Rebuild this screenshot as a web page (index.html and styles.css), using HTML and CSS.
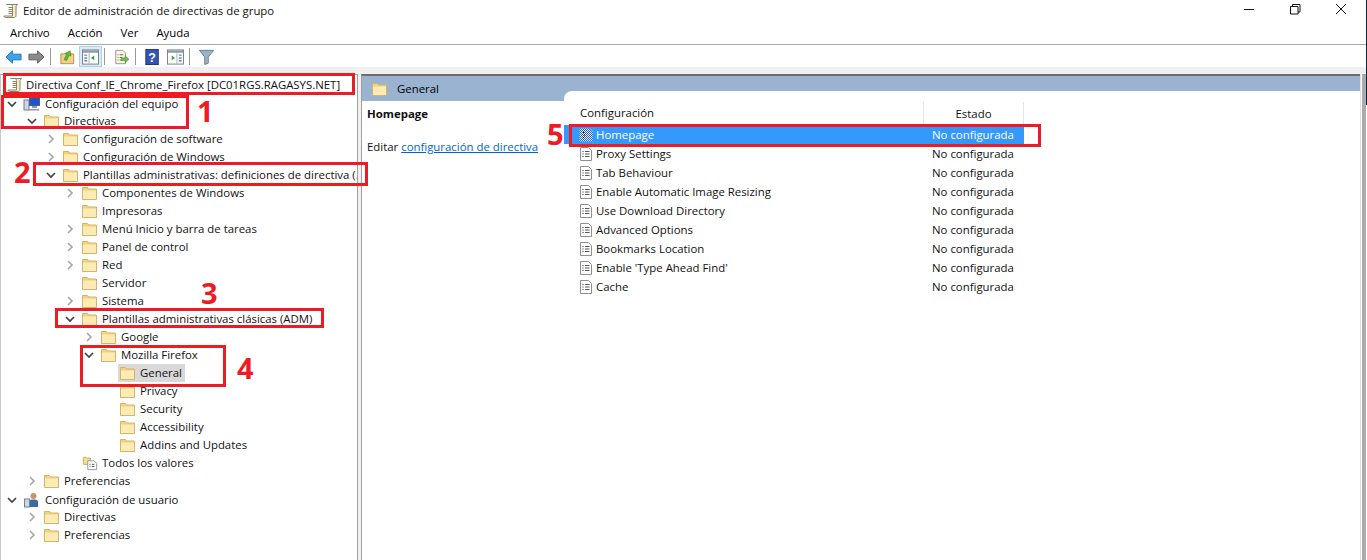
FILE: index.html
```html
<!DOCTYPE html>
<html lang="es">
<head>
<meta charset="utf-8">
<title>Editor de administración de directivas de grupo</title>
<link rel="stylesheet" href="styles.css">
</head>
<body>
<svg class="defs" width="0" height="0">
  <defs>
    <pattern id="dith" width="2" height="2" patternUnits="userSpaceOnUse">
      <rect width="2" height="2" fill="#1860c0"/>
      <rect width="1" height="1" fill="#fff"/>
      <rect x="1" y="1" width="1" height="1" fill="#fff"/>
    </pattern>
    <symbol id="folder" viewBox="0 0 16 16">
      <path d="M.5 2.500h5l1 1.500h8v10.500h-14z" fill="#f3d27e" stroke="#d4b46a"/>
      <path d="M1 5.500h13v8.500h-13z" fill="#fcebb2"/>
    </symbol>
    <symbol id="chev-open" viewBox="0 0 10 10"><path d="M1 3l4 4 4-4" fill="none" stroke="#404040" stroke-width="1.600"/></symbol>
    <symbol id="chev-closed" viewBox="0 0 10 10"><path d="M3 1l4 4-4 4" fill="none" stroke="#a6a6a6" stroke-width="1.600"/></symbol>
    <symbol id="scroll" viewBox="0 0 16 16">
      <path d="M3.500 1.500h11l-1.500 2v9c0 1.500-1 2-2 2H2.500c-1 0-1.500-.7-1.500-1.500h8.500V3.500c0-1-.5-2-2-2z" fill="#f4ecd0" stroke="#8c8463"/>
      <path d="M5.500 4.500h4M5.500 6.500h4M5.500 8.500h4M5.500 10.500h4" stroke="#8c8463"/>
    </symbol>
    <symbol id="setting" viewBox="0 0 16 16">
      <path d="M2.500 1.500h8l3 3v10h-11z" fill="#fff" stroke="#8f8f8f"/>
      <path d="M4.500 5.500h1M4.500 8h1M4.500 10.500h1" stroke="#222"/>
      <path d="M7 5.500h4.500M7 8h4.500M7 10.500h4.500" stroke="#555"/>
    </symbol>
    <symbol id="setting-sel" viewBox="0 0 16 16">
      <path d="M1.500 1.500h10l3 3v10h-13z" fill="url(#dith)"/>
      <path d="M5 5.500h1M6 8h1M5 10.500h1" stroke="#123"/>
    </symbol>
    <symbol id="computer" viewBox="0 0 18 16">
      <rect x="1" y="4" width="5" height="10" fill="#cfd6e3" stroke="#6f7f9c"/>
      <rect x="6.500" y="1.500" width="10" height="8" fill="#1c56c8" stroke="#50607a"/>
      <path d="M9 10h5v2H9zM5 13h11v1.500H5z" fill="#8e9ab0"/>
    </symbol>
    <symbol id="user" viewBox="0 0 18 16">
      <circle cx="10.500" cy="4" r="3" fill="#c69472"/>
      <path d="M6 15V9.500C6 8 8 7.500 10.500 7.500S15 8 15 9.500V15z" fill="#3d6d9c"/>
      <rect x="1.500" y="7" width="5" height="8" fill="#cfd6e3" stroke="#6f7f9c"/>
    </symbol>
    <symbol id="allvalues" viewBox="0 0 18 18">
      <path d="M1.500 2.500h3l1 1h4v7h-8z" fill="#f7dd90" stroke="#c9a95c"/>
      <path d="M6.500 6.500h7l3 3v7h-10z" fill="#fff" stroke="#8f8f8f"/>
      <path d="M8.500 10.500h1M8.500 13h1M11 10.500h3M11 13h3" stroke="#444"/>
    </symbol>
  </defs>
</svg>

<div class="window">
  <header class="titlebar">
    <svg class="title-icon"><use href="#scroll"/></svg>
    <span class="title-text">Editor de administración de directivas de grupo</span>
    <div class="window-controls">
      <svg class="wc" viewBox="0 0 12 12"><path d="M1 6.500h10" stroke="#111" fill="none"/></svg>
      <svg class="wc" viewBox="0 0 12 12"><path d="M1.500 3.500h7.500v7.500H1.500zM3.500 3.500V1.500h7.500v7.500H9" stroke="#111" fill="none"/></svg>
      <svg class="wc" viewBox="0 0 12 12"><path d="M1 1l10 10M11 1L1 11" stroke="#111" fill="none"/></svg>
    </div>
  </header>

  <nav class="menubar">
    <span>Archivo</span><span>Acción</span><span>Ver</span><span>Ayuda</span>
  </nav>

  <div class="toolbar">
    <button class="tool"><svg viewBox="0 0 18 16"><path d="M1 8l7-6.500V5h9v6H8v3.500z" fill="#3fa3ea" stroke="#1b74c5"/></svg></button>
    <button class="tool"><svg viewBox="0 0 18 16"><path d="M17 8l-7-6.500V5H1v6h9v3.500z" fill="#8a8a8a" stroke="#5c5c5c"/></svg></button>
    <i class="sep"></i>
    <button class="tool"><svg viewBox="0 0 18 18"><path d="M1.500 5.500h14.500v11H1.500z" fill="#f1d285" stroke="#b08c40"/><path d="M5 12l3-6-2-1 6-3 1 6-2-1-3 6z" fill="#5eb53a" stroke="#3d8a24" stroke-width=".6"/></svg></button>
    <button class="tool active"><svg viewBox="0 0 18 16"><rect x=".5" y=".5" width="17" height="15" fill="#fff" stroke="#7d7d7d"/><rect x="1" y="1" width="16" height="2.500" fill="#8d99a8"/><path d="M2.500 6h3M2.500 9h3M2.500 12h3" stroke="#5b87b5" stroke-width="1.500"/><path d="M7.500 4v11" stroke="#aaa"/><path d="M13 6.500v5l-3.500-2.500z" fill="#35a035"/></svg></button>
    <i class="sep"></i>
    <button class="tool"><svg viewBox="0 0 18 18"><path d="M2.500 1.500h8l3 3v12h-11z" fill="#fbf6e4" stroke="#8f8f8f"/><path d="M4.500 6.500h1M4.500 9.500h1M4.500 12.500h1M7 6.500h4M7 9.500h3M7 12.500h3" stroke="#555"/><path d="M9 10h4V7.500l4.500 4-4.500 4V13H9z" fill="#6ec04c" stroke="#3c8d28" stroke-width=".6"/></svg></button>
    <i class="sep"></i>
    <button class="tool"><svg viewBox="0 0 16 18"><rect x=".5" y=".5" width="14" height="17" fill="#3454b4" stroke="#1b2f75"/><text x="7.500" y="14.500" class="help-mark">?</text></svg></button>
    <button class="tool"><svg viewBox="0 0 18 16"><rect x=".5" y=".5" width="17" height="15" fill="#fff" stroke="#7d7d7d"/><rect x="1" y="1" width="16" height="2.500" fill="#8d99a8"/><path d="M12.500 6h3M12.500 9h3M12.500 12h3" stroke="#5b87b5" stroke-width="1.500"/><path d="M10.500 4v11" stroke="#aaa"/><path d="M5 6.500v5l3.500-2.500z" fill="#35a035"/></svg></button>
    <i class="sep"></i>
    <button class="tool"><svg viewBox="0 0 18 18"><path d="M1 1.500h16L11 9v7l-4 1.500V9z" fill="#9cb4c8" stroke="#5e7a92"/></svg></button>
  </div>

  <main class="panes">
    <section class="tree">
      <div class="row root"><svg class="ico"><use href="#scroll"/></svg><span>Directiva Conf_IE_Chrome_Firefox [DC01RGS.RAGASYS.NET]</span></div>
      <div class="row l0"><svg class="chev"><use href="#chev-open"/></svg><svg class="ico wide"><use href="#computer"/></svg><span>Configuración del equipo</span></div>
      <div class="row l1"><svg class="chev"><use href="#chev-open"/></svg><svg class="ico"><use href="#folder"/></svg><span>Directivas</span></div>
      <div class="row l2"><svg class="chev"><use href="#chev-closed"/></svg><svg class="ico"><use href="#folder"/></svg><span>Configuración de software</span></div>
      <div class="row l2"><svg class="chev"><use href="#chev-closed"/></svg><svg class="ico"><use href="#folder"/></svg><span>Configuración de Windows</span></div>
      <div class="row l2"><svg class="chev"><use href="#chev-open"/></svg><svg class="ico"><use href="#folder"/></svg><span>Plantillas administrativas: definiciones de directiva (.</span></div>
      <div class="row l3"><svg class="chev"><use href="#chev-closed"/></svg><svg class="ico"><use href="#folder"/></svg><span>Componentes de Windows</span></div>
      <div class="row l3"><i class="chev"></i><svg class="ico"><use href="#folder"/></svg><span>Impresoras</span></div>
      <div class="row l3"><svg class="chev"><use href="#chev-closed"/></svg><svg class="ico"><use href="#folder"/></svg><span>Menú Inicio y barra de tareas</span></div>
      <div class="row l3"><svg class="chev"><use href="#chev-closed"/></svg><svg class="ico"><use href="#folder"/></svg><span>Panel de control</span></div>
      <div class="row l3"><svg class="chev"><use href="#chev-closed"/></svg><svg class="ico"><use href="#folder"/></svg><span>Red</span></div>
      <div class="row l3"><i class="chev"></i><svg class="ico"><use href="#folder"/></svg><span>Servidor</span></div>
      <div class="row l3"><svg class="chev"><use href="#chev-closed"/></svg><svg class="ico"><use href="#folder"/></svg><span>Sistema</span></div>
      <div class="row l3"><svg class="chev"><use href="#chev-open"/></svg><svg class="ico"><use href="#folder"/></svg><span>Plantillas administrativas clásicas (ADM)</span></div>
      <div class="row l4"><svg class="chev"><use href="#chev-closed"/></svg><svg class="ico"><use href="#folder"/></svg><span>Google</span></div>
      <div class="row l4"><svg class="chev"><use href="#chev-open"/></svg><svg class="ico"><use href="#folder"/></svg><span>Mozilla Firefox</span></div>
      <div class="row l5"><i class="chev"></i><span class="selected"><svg class="ico"><use href="#folder"/></svg><span>General</span></span></div>
      <div class="row l5"><i class="chev"></i><svg class="ico"><use href="#folder"/></svg><span>Privacy</span></div>
      <div class="row l5"><i class="chev"></i><svg class="ico"><use href="#folder"/></svg><span>Security</span></div>
      <div class="row l5"><i class="chev"></i><svg class="ico"><use href="#folder"/></svg><span>Accessibility</span></div>
      <div class="row l5"><i class="chev"></i><svg class="ico"><use href="#folder"/></svg><span>Addins and Updates</span></div>
      <div class="row l3"><i class="chev"></i><svg class="ico"><use href="#allvalues"/></svg><span>Todos los valores</span></div>
      <div class="row l1"><svg class="chev"><use href="#chev-closed"/></svg><svg class="ico"><use href="#folder"/></svg><span>Preferencias</span></div>
      <div class="row l0"><svg class="chev"><use href="#chev-open"/></svg><svg class="ico wide"><use href="#user"/></svg><span>Configuración de usuario</span></div>
      <div class="row l1"><svg class="chev"><use href="#chev-closed"/></svg><svg class="ico"><use href="#folder"/></svg><span>Directivas</span></div>
      <div class="row l1"><svg class="chev"><use href="#chev-closed"/></svg><svg class="ico"><use href="#folder"/></svg><span>Preferencias</span></div>
    </section>

    <section class="detail">
      <div class="detail-head"><svg class="ico"><use href="#folder"/></svg><span>General</span></div>
      <div class="detail-body">
        <aside class="desc">
          <h2>Homepage</h2>
          <p>Editar <a href="#">configuración de directiva</a></p>
        </aside>
        <div class="list">
          <div class="list-head"><span class="col-name">Configuración</span><span class="col-state">Estado</span></div>
          <div class="item current"><span class="col-name"><svg class="ico"><use href="#setting-sel"/></svg><span>Homepage</span></span><span class="col-state">No configurada</span></div>
          <div class="item"><span class="col-name"><svg class="ico"><use href="#setting"/></svg><span>Proxy Settings</span></span><span class="col-state">No configurada</span></div>
          <div class="item"><span class="col-name"><svg class="ico"><use href="#setting"/></svg><span>Tab Behaviour</span></span><span class="col-state">No configurada</span></div>
          <div class="item"><span class="col-name"><svg class="ico"><use href="#setting"/></svg><span>Enable Automatic Image Resizing</span></span><span class="col-state">No configurada</span></div>
          <div class="item"><span class="col-name"><svg class="ico"><use href="#setting"/></svg><span>Use Download Directory</span></span><span class="col-state">No configurada</span></div>
          <div class="item"><span class="col-name"><svg class="ico"><use href="#setting"/></svg><span>Advanced Options</span></span><span class="col-state">No configurada</span></div>
          <div class="item"><span class="col-name"><svg class="ico"><use href="#setting"/></svg><span>Bookmarks Location</span></span><span class="col-state">No configurada</span></div>
          <div class="item"><span class="col-name"><svg class="ico"><use href="#setting"/></svg><span>Enable 'Type Ahead Find'</span></span><span class="col-state">No configurada</span></div>
          <div class="item"><span class="col-name"><svg class="ico"><use href="#setting"/></svg><span>Cache</span></span><span class="col-state">No configurada</span></div>
        </div>
      </div>
    </section>
    <div class="vscroll"><i class="thumb"></i></div>
  </main>

  <div class="mark box-root"></div>
  <div class="mark box-1"></div>
  <div class="mark box-2"></div>
  <div class="mark box-3"></div>
  <div class="mark box-4"></div>
  <div class="mark box-5"></div>
  <b class="num n1">1</b>
  <b class="num n2">2</b>
  <b class="num n3">3</b>
  <b class="num n4">4</b>
  <b class="num n5">5</b>
  <i class="edge"></i>
</div>
</body>
</html>
```

FILE: styles.css
```css
* { box-sizing: border-box; }
html, body { margin: 0; height: 100%; overflow: hidden; }
body { background: #fff; font: 11.4px/18px "Open Sans", "Noto Sans", sans-serif; color: #000; }
.defs { position: absolute; }
.window { position: relative; width: 1367px; height: 560px; display: flex; flex-direction: column; }

.titlebar { height: 22px; display: flex; align-items: center; padding-left: 3px; flex: none; }
.title-icon { width: 16px; height: 16px; margin-right: 4px; }
.title-text { color: #111; }
.window-controls { margin-left: auto; display: flex; gap: 34px; padding-right: 20px; margin-top: -4px; }
.wc { width: 12px; height: 12px; }

.menubar { height: 23px; display: flex; gap: 18px; padding: 0 0 1px 10px; align-items: center; flex: none; border-bottom: 1px solid #a9a9a9; }

.toolbar { height: 22px; display: flex; align-items: center; padding: 1px 0 0 2px; flex: none; }
.tool { width: 23px; height: 21px; padding: 0; border: 1px solid transparent; background: none; display: flex; align-items: center; justify-content: center; }
.tool svg { width: 17px; height: 16px; }
.tool.active { background: #d9ebf9; border-color: #a8d2f3; }
.sep { width: 1px; height: 17px; background: #9a9a9a; margin: 0 5px 0 2px; }
.help-mark { fill: #fff; font: bold 14px "Liberation Sans", sans-serif; text-anchor: middle; }

.panes { flex: 1; min-height: 0; display: flex; background: #f0f0f0; padding-top: 7px; }

.tree { width: 358px; background: #fff; border-top: 1px solid #a0a0a0; border-right: 1px solid #a0a0a0; border-left: 1px solid #c8c8c8; padding-top: 1px; flex: none; overflow: hidden; }
.row { height: 18px; display: flex; align-items: center; white-space: nowrap; color: #111; }
.chev { width: 10px; height: 10px; flex: none; margin-right: 7px; }
.ico { width: 16px; height: 16px; flex: none; }
.ico.wide { width: 18px; }
.row > .ico { margin-right: 4px; }
.root { padding-left: 6px; }
.root > .ico { margin-right: 3px; }
.l0 { padding: 1px 0 0 6px; }
.l0 > .chev { margin-right: 6px; }
.l0 > .ico { margin-right: 4px; }
.l1 { padding-left: 26px; }
.l2 { padding-left: 45px; }
.l3 { padding-left: 64px; }
.l4 { padding-left: 83px; }
.l5 { padding-left: 102px; }
.selected { display: flex; align-items: center; background: #d9d9d9; height: 18px; width: 67px; margin-left: -2px; padding-left: 2px; }
.selected .ico { margin-right: 4px; }

.detail { flex: 1; min-width: 0; margin-left: 3px; background: #fff; border-top: 2px solid #6d6d6d; border-left: 1px solid #a0a0a0; display: flex; flex-direction: column; }
.detail-head { height: 25px; background: #9ab3d1; display: flex; align-items: center; padding-left: 10px; gap: 9px; flex: none; }
.detail-body { flex: 1; display: flex; min-height: 0; }
.desc { width: 202px; padding: 4px 0 0 5px; flex: none; }
.desc h2 { margin: 0; font-size: 11.4px; font-weight: 700; line-height: 18px; color: #111; }
.desc p { margin: 15px 0 0; color: #111; }
.desc a { color: #0066cc; }

.list { flex: 1; margin-top: -10px; background: #fff; border-top-left-radius: 8px; padding-top: 10px; }
.list-head { height: 24px; display: flex; align-items: center; color: #111; }
.list-head .col-name { padding-left: 16px; }
.list-head .col-state { text-align: center; border-left: 1px solid #e5e5e5; border-right: 1px solid #e5e5e5; height: 23px; line-height: 23px; }
.col-name { width: 359px; flex: none; display: flex; align-items: center; gap: 2px; }
.col-state { width: 101px; flex: none; }
.item { height: 19px; display: flex; align-items: center; width: 460px; padding-left: 14px; color: #111; }
.item .col-name { width: 345px; }
.item .col-state { padding-left: 9px; }
.item.current { background: #3399ff; color: #fff; }

.vscroll { width: 7px; background: #fff; border-left: 1px solid #e0e0e0; position: relative; flex: none; }
.thumb { position: absolute; top: 0; left: 1px; right: 1px; bottom: 0; background: #ababab; }
.edge { position: absolute; right: 0; top: 0; width: 1px; height: 105px; background: #0b2545; }

.mark { position: absolute; border: 3px solid #ed1c24; }
.box-root { left: 3px; top: 73px; width: 352px; height: 22px; }
.box-1 { left: 1px; top: 95px; width: 188px; height: 34px; }
.box-2 { left: 33px; top: 162px; width: 335px; height: 24px; }
.box-3 { left: 55px; top: 308px; width: 269px; height: 20px; }
.box-4 { left: 80px; top: 345px; width: 146px; height: 42px; }
.box-5 { left: 569px; top: 124px; width: 472px; height: 23px; }
.num { position: absolute; color: #ed1c24; font: 700 29px/32px "Open Sans", sans-serif; }
.n1 { left: 197px; top: 95px; }
.n2 { left: 14px; top: 156px; }
.n3 { left: 201px; top: 277px; }
.n4 { left: 237px; top: 352px; }
.n5 { left: 547px; top: 118px; }
```
